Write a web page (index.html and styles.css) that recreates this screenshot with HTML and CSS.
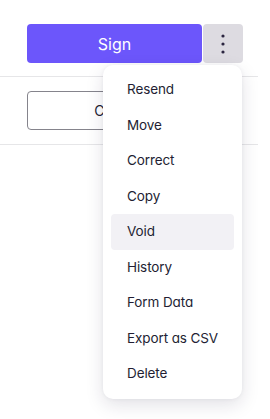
FILE: index.html
```html
<!DOCTYPE html>
<html lang="en">
<head>
  <meta charset="UTF-8" />
  <meta name="viewport" content="width=device-width, initial-scale=1.0"/>
  <title>Document Actions</title>
  <link rel="stylesheet" href="styles.css">
</head>
<body>
  <div class="panel">
    <div class="section">
      <div class="actions">
        <button class="btn-sign">Sign</button>
        <div class="more-wrap">
          <button class="btn-more" aria-label="More actions">
            <svg width="4" height="20" viewBox="0 0 4 20">
              <circle cx="2" cy="2" r="1.6" />
              <circle cx="2" cy="10" r="1.6" />
              <circle cx="2" cy="18" r="1.6" />
            </svg>
          </button>
          <ul class="menu">
            <li>Resend</li>
            <li>Move</li>
            <li>Correct</li>
            <li>Copy</li>
            <li class="active">Void</li>
            <li>History</li>
            <li>Form Data</li>
            <li>Export as CSV</li>
            <li>Delete</li>
          </ul>
        </div>
      </div>
    </div>

    <div class="section">
      <button class="btn-outline">Comments</button>
    </div>
  </div>
</body>
</html>
```

FILE: styles.css
```css
* {
  box-sizing: border-box;
}
html, body {
  min-height: 100vh;
}
body {
  margin: 0;
  font-family: Inter, 'Noto Sans', sans-serif;
  font-feature-settings: 'cv11';
  color: #231e33;
  background: #ffffff;
}

.panel {
  width: 258px;
  min-height: 419px;
}

.section {
  padding: 24px 15px 13px 27px;
  border-bottom: 1px solid #e6e6e8;
}
.section + .section {
  padding: 14px 15px 14px 27px;
}

.actions {
  display: flex;
  gap: 1px;
}

button {
  font-family: inherit;
  font-feature-settings: inherit;
  border: none;
  cursor: pointer;
}

.btn-sign {
  flex: 1;
  height: 39px;
  background-color: #6c56fb;
  color: #ffffff;
  font-size: 16px;
  border-radius: 4px;
}

.more-wrap {
  position: relative;
  z-index: 5;
}

.btn-more {
  width: 40px;
  height: 39px;
  background-color: #dddbe1;
  border-radius: 4px;
  display: flex;
  align-items: center;
  justify-content: center;
  padding: 0;
}
.btn-more svg {
  fill: #2b2540;
}

.btn-outline {
  width: 206px;
  height: 39px;
  background: #ffffff;
  border: 1px solid #85848c;
  border-radius: 4px;
  font-size: 14px;
  color: #231e33;
}

.menu {
  position: absolute;
  top: 41px;
  right: 1px;
  width: 139px;
  margin: 0;
  padding: 7px 8px;
  list-style: none;
  background: #ffffff;
  border-radius: 10px;
  box-shadow: 0 6px 18px rgba(30, 20, 60, 0.13), 0 0 4px rgba(30, 20, 60, 0.05);
}

.menu li {
  height: 35.5px;
  line-height: 35.5px;
  padding-left: 16px;
  font-size: 13.5px;
  letter-spacing: -0.1px;
  border-radius: 4px;
  white-space: nowrap;
}

.menu li.active {
  background-color: #f2f1f5;
}
```
